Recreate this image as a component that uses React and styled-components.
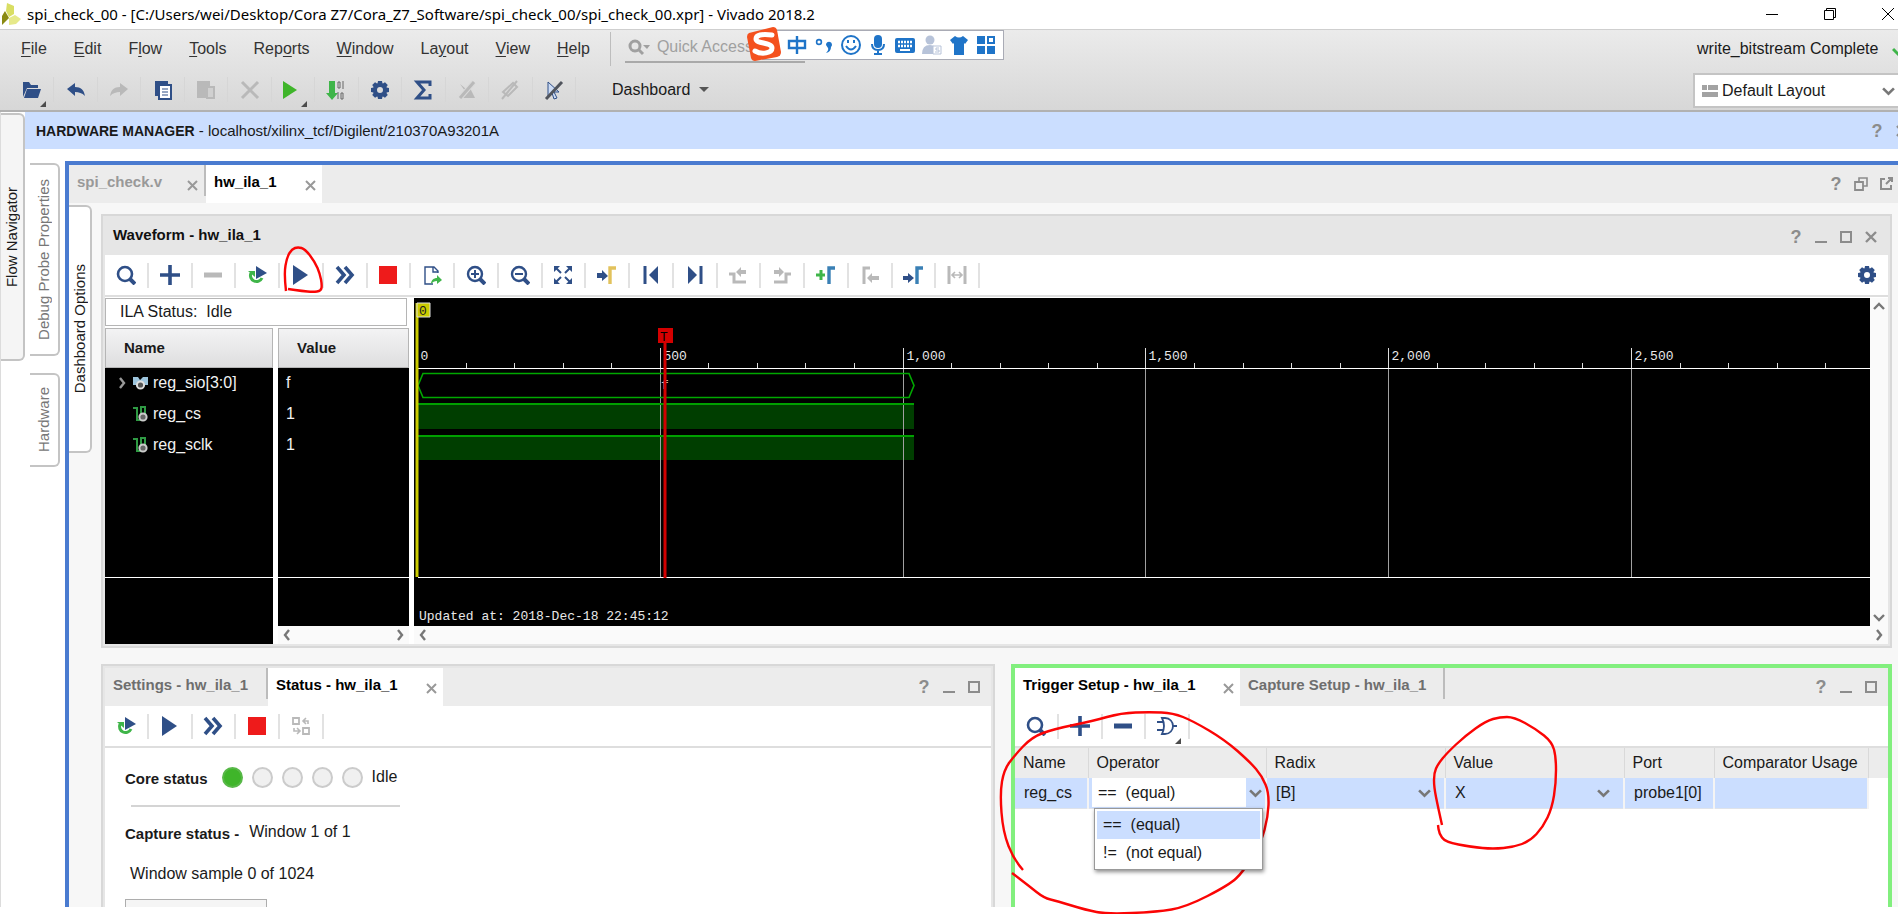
import React from "react";
import styled, { createGlobalStyle } from "styled-components";

const GlobalStyle = createGlobalStyle`
  * {
    box-sizing: border-box;
  }

  body {
    margin: 0;
    overflow: hidden;
    background: #fff;
    color: #1a1a1a;
    font-family: "Liberation Sans", Arial, sans-serif;
    font-size: 16px;
    line-height: 20px;
  }

  button,
  select,
  input {
    font: inherit;
    color: inherit;
    margin: 0;
    padding: 0;
    border: none;
    background: none;
  }

  svg {
    display: block;
    flex: none;
  }
`;

const NAVY = "#2f4f87";
const GREY = "#b9b9b9";
const GREEN = "#3fb549";

/* ---------- icons ---------- */

const line = (color, width = 3) => ({
  fill: "none",
  stroke: color,
  strokeWidth: width,
});

const gearTeeth = [0, 45, 90, 135, 180, 225, 270, 315];

const icons = {
  folder: (
    <>
      <path d="M1 17V2h6l2 3h7v3H5z" fill={NAVY} />
      <path d="M5 9h14l-3 9H2z" fill={NAVY} />
    </>
  ),
  undo: <path d="M1 9l8-6v4c6 0 9 3 10 9-3-3-6-4-10-4v4z" fill={NAVY} />,
  redo: <path d="M19 9l-8-6v4c-6 0-9 3-10 9 3-3 6-4 10-4v4z" fill={GREY} />,
  copy: (
    <>
      <path d="M2 1h13v3H6v12H2z" fill={NAVY} />
      <path d="M6 5h12v14H6z" fill="#fff" stroke={NAVY} strokeWidth="2" />
      <path d="M9 9h6M9 12h6M9 15h6" {...line(NAVY, 1)} />
    </>
  ),
  paste: (
    <>
      <path d="M1 1h13v5h-4v12H1z" fill={GREY} />
      <path d="M11 7h7v11h-7z" fill="#d0d0d0" stroke={GREY} strokeWidth="2" />
    </>
  ),
  cross: <path d="M2 2l16 16M18 2L2 18" {...line(GREY, 3)} />,
  run: <path d="M0 1l14 9-14 9z" fill="#3fb52a" />,
  program: (
    <>
      <path d="M3 1h6v12h3l-6 7-6-7h3z" fill={GREEN} />
      <path d="M12 2h2v6h-2zM17 1v8M12 12v7M15 13h2v6h-2z" {...line("#666", 1)} />
    </>
  ),
  gear: (
    <>
      {gearTeeth.map((a) => (
        <path key={a} d="M8 1h4l1 5H7z" fill={NAVY} transform={`rotate(${a} 10 10)`} />
      ))}
      <circle cx="10" cy="10" r="5" {...line(NAVY, 4)} />
    </>
  ),
  sigma: <path d="M17 6V2H4l7 8-7 8h13v-4" {...line(NAVY, 3)} />,
  bugOff: (
    <>
      <path d="M3 4l6 5 4-5 1 6 4 8H4l4-7z" fill={GREY} />
      <path d="M3 18L17 2" {...line("#d9d9d9", 5)} />
      <path d="M3 18L17 2" {...line(GREY, 3)} />
    </>
  ),
  linkOff: (
    <>
      <path d="M3 12L13 3l4 4-9 9z" {...line(GREY, 2)} />
      <path d="M2 19L17 1" {...line(GREY, 2)} />
    </>
  ),
  cursorOff: (
    <>
      <path d="M4 2l11 10h-5l3 6-3 1-2-6-4 3z" fill="#cddcf5" stroke={NAVY} />
      <path d="M2 19L18 2" {...line("#50545c", 3)} />
    </>
  ),
  search: (
    <>
      <circle cx="9" cy="9" r="7" {...line(NAVY, 2.6)} />
      <path d="M14 14l5 5" {...line(NAVY, 4)} />
    </>
  ),
  plus: <path d="M10 0v20M0 10h20" {...line(NAVY, 3.6)} />,
  minus: <path d="M1 10h18" {...line(NAVY, 5)} />,
  minusGrey: <path d="M1 10h18" {...line(GREY, 5)} />,
  rerun: (
    <>
      <path d="M4 8a6 6 0 1 0 11 5" {...line(GREEN, 3)} />
      <path d="M1 6h7v6z" fill={GREEN} />
      <path d="M9 1l11 7-11 6z" fill={NAVY} />
    </>
  ),
  play: <path d="M2 0l15 10-15 10z" fill={NAVY} />,
  forward: <path d="M2 2l7 8-7 8M10 2l7 8-7 8" {...line(NAVY, 3.6)} />,
  stop: <path d="M1 1h18v18H1z" fill="#ee1b1b" />,
  exportFile: (
    <>
      <path d="M16 8V6l-4-4H3v17h8M11 2v5h5" {...line(NAVY, 1.4)} />
      <path d="M9 19c0-4 3-6 6-6v-3l5 5-5 4v-3c-3 0-4 1-6 3z" fill={GREEN} />
    </>
  ),
  zoomIn: (
    <>
      <circle cx="9" cy="9" r="7" {...line(NAVY, 2.4)} />
      <path d="M14 14l5 5" {...line(NAVY, 4)} />
      <path d="M9 5v8M5 9h8" {...line(NAVY, 2)} />
    </>
  ),
  zoomOut: (
    <>
      <circle cx="9" cy="9" r="7" {...line(NAVY, 2.4)} />
      <path d="M14 14l5 5" {...line(NAVY, 4)} />
      <path d="M5 9h8" {...line(NAVY, 2)} />
    </>
  ),
  fit: (
    <>
      <path d="M1 1h6L1 7zM19 1v6l-6-6zM1 19v-6l6 6zM19 19h-6l6-6z" fill={NAVY} />
      <path d="M3 3l5 5M17 3l-5 5M3 17l5-5M17 17l-5-5" {...line(NAVY, 2)} />
    </>
  ),
  gotoTrigger: (
    <>
      <path d="M0 8h5V5l6 6-6 5v-3H0z" fill={NAVY} />
      <path d="M13 19V3h6" {...line("#e2c25c", 3.4)} />
    </>
  ),
  first: (
    <>
      <path d="M4 1v18" {...line(NAVY, 3)} />
      <path d="M17 1v18l-9-9z" fill={NAVY} />
    </>
  ),
  last: (
    <>
      <path d="M16 1v18" {...line(NAVY, 3)} />
      <path d="M3 1v18l9-9z" fill={NAVY} />
    </>
  ),
  prevEdge: (
    <>
      <path d="M1 9h5v8h12" {...line(GREY, 3)} />
      <path d="M8 7l5-5v3h5v4h-5v3z" fill={GREY} />
    </>
  ),
  nextEdge: (
    <>
      <path d="M2 17h12V9h5" {...line(GREY, 3)} />
      <path d="M12 7L7 2v3H2v4h5v3z" fill={GREY} />
    </>
  ),
  addMarker: (
    <>
      <path d="M5 5v10M0 10h9" {...line(GREEN, 3)} />
      <path d="M13 19V3h6" {...line("#3a80b5", 3.4)} />
    </>
  ),
  prevMarker: (
    <>
      <path d="M4 19V3h6" {...line(GREY, 3)} />
      <path d="M7 13l5-5v3h7v4h-7v3z" fill={GREY} />
    </>
  ),
  nextMarker: (
    <>
      <path d="M0 11h5V8l6 5-6 5v-3H0z" fill={NAVY} />
      <path d="M14 19V3h6" {...line("#3a80b5", 3.4)} />
    </>
  ),
  measure: (
    <>
      <path d="M2 1v18M18 1v18" {...line(GREY, 3)} />
      <path d="M5 10h10M8 7l-3 3 3 3M12 7l3 3-3 3" {...line(GREY, 1.6)} />
    </>
  ),
  swap: (
    <>
      <path d="M2 2h6v6H2zM12 12h6v6h-6z" {...line(GREY, 1.8)} />
      <path d="M17 8V5h-5m3-3l-3 3 3 3M3 12v3h6m-3-3l3 3-3 3" {...line(GREY, 1.6)} />
    </>
  ),
  gate: (
    <path
      d="M5 2h3c5 0 8 4 8 8s-3 8-8 8H5q4-8 0-16zM0 6h6M0 14h6M16 10h4"
      {...line(NAVY, 1.8)}
    />
  ),
};

const Icon = ({ name, size = 20 }) => (
  <svg width={size} height={size} viewBox="0 0 20 20" aria-hidden="true">
    {icons[name]}
  </svg>
);

const Chevron = ({ dir = "down", size = 12, color = "#777" }) => {
  const d = {
    down: "M1 4l5 5 5-5",
    up: "M1 8l5-5 5 5",
    left: "M8 1L4 6l4 5",
    right: "M4 1l4 5-4 5",
  }[dir];
  return (
    <svg width={size} height={size} viewBox="0 0 12 12" aria-hidden="true">
      <path d={d} {...line(color, 2.4)} />
    </svg>
  );
};

const controlShapes = {
  min: <path d="M1 12h12" {...line("#8c8c8c", 2)} />,
  max: <path d="M2 2h10v10H2z" {...line("#8c8c8c", 2)} />,
  close: <path d="M2 2l10 10M12 2L2 12" {...line("#8c8c8c", 2.4)} />,
  float: (
    <>
      <path d="M5 5V1h8v8H9" {...line("#8c8c8c", 1.6)} />
      <path d="M1 5h8v8H1z" {...line("#8c8c8c", 1.8)} />
    </>
  ),
  popout: <path d="M6 2H2v10h10V8M7 7l5-5M9 1h4v4" {...line("#8c8c8c", 2)} />,
};

/* ---------- title bar and menus ---------- */

const Page = styled.div`
  position: relative;
  display: flex;
  flex-direction: column;
  height: 100vh;
  padding-bottom: 7px;
  overflow: hidden;
`;

const TitleBar = styled.div`
  display: flex;
  align-items: center;
  justify-content: space-between;
  flex: none;
  height: 30px;
  padding: 0 3px 2px 0;
  border-bottom: 1px solid #cfcfcf;
  color: #000;
  font-family: "Noto Sans", "Open Sans", sans-serif;
  font-size: 15px;

  .caption,
  .buttons {
    display: flex;
    align-items: center;
  }

  .caption {
    gap: 5px;
  }

  .buttons {
    gap: 44px;
  }
`;

const Header = styled.header`
  position: relative;
  display: flex;
  justify-content: space-between;
  flex: none;
  height: 82px;
  border-bottom: 2px solid #b1b1b1;
  background: linear-gradient(#ebebeb, #d7d7d7);
`;

const MenuRow = styled.nav`
  display: flex;
  align-items: center;
  height: 38px;
  padding-left: 21px;

  ul {
    display: flex;
    gap: 27px;
    margin: 0;
    padding: 0;
    list-style: none;
  }

  button {
    color: #333;
  }

  u {
    text-underline-offset: 2px;
  }
`;

const QuickAccess = styled.label`
  display: flex;
  align-items: center;
  width: 195px;
  height: 34px;
  margin-left: 20px;
  padding-left: 14px;
  border-left: 1px solid #bdbdbd;

  div {
    display: flex;
    align-items: center;
    gap: 6px;
    flex: 1;
    height: 28px;
    padding: 0 0 3px 3px;
    border-bottom: 2px solid #a9a9a9;
  }

  input {
    width: 100%;
    outline: none;
  }

  input::placeholder {
    color: #a0a0a0;
    opacity: 1;
  }
`;

const MainTools = styled.div`
  display: flex;
  align-items: center;
  height: 43px;
  padding-left: 11px;
`;

const ToolGrid = styled.div`
  display: grid;
  grid-template-columns: repeat(${(p) => p.$count}, 1fr);
  width: 100%;
  max-width: ${(p) => p.$width}px;
`;

const ToolButton = styled.button`
  position: relative;
  display: flex;
  align-items: center;
  justify-content: center;
  height: 25px;
  border-right: ${(p) => (p.$quiet ? 1 : 2)}px solid
    ${(p) => (p.$quiet ? "#d6d6d6" : "#e2e2e2")};

  &.has-menu::after {
    content: "";
    position: absolute;
    right: 7px;
    bottom: -5px;
    border: 3px solid transparent;
    border-right-color: #4c4c4c;
    border-bottom-color: #4c4c4c;
  }
`;

const DashboardMenu = styled.button`
  display: flex;
  align-items: center;
  gap: 9px;
  margin-left: 36px;

  &::after {
    content: "";
    border: 5px solid transparent;
    border-top-color: #555;
    border-bottom: 0;
  }
`;

const HeaderRight = styled.div`
  display: flex;
  flex-direction: column;
  width: 205px;

  .status {
    display: flex;
    align-items: center;
    gap: 14px;
    height: 38px;
    margin-right: -20px;
    padding-left: 4px;
    white-space: nowrap;
  }
`;

const LayoutPicker = styled.label`
  display: flex;
  align-items: center;
  gap: 4px;
  height: 35px;
  margin-top: 5px;
  padding: 0 3px 0 7px;
  border: 2px solid #c4c4c4;
  border-right: none;
  background: #fff;

  select {
    flex: 1;
    appearance: none;
  }
`;

const ImeBar = styled.div`
  position: absolute;
  top: 0;
  left: 762px;
  display: flex;
  align-items: center;
  gap: 5px;
  width: 242px;
  height: 30px;
  padding-left: 23px;
  border: 1px solid #a9abb5;
  background: #fff;

  .logo {
    position: absolute;
    top: -5px;
    left: -17px;
  }
`;

const blue = "#1f74c8";

const imeIcons = [
  <path key="zh" d="M3 7h16v7H3zM11 2v18" {...line(blue, 2.4)} />,
  <g key="punct">
    <circle cx="6" cy="8" r="2.4" {...line(blue, 1.6)} />
    <path d="M13 11a3 3 0 1 1 5 2q0 5-5 6 3-3 2-5z" fill={blue} />
  </g>,
  <g key="smile">
    <circle cx="11" cy="11" r="9" {...line(blue, 2)} />
    <path d="M6 12q5 7 10 0M8 6v3M14 6v3" {...line(blue, 2)} />
  </g>,
  <g key="mic">
    <rect x="7" y="1" width="8" height="13" rx="4" fill={blue} />
    <path d="M5 10q0 6 6 6t6-6M11 16v4M7 20h8" {...line(blue, 2)} />
  </g>,
  <g key="keys">
    <rect x="1" y="4" width="20" height="15" rx="2" fill={blue} />
    <path d="M4 8h14M4 12h14" {...line("#fff", 2.4)} strokeDasharray="2 1" />
    <path d="M6 16h10" {...line("#fff", 2)} />
  </g>,
  <g key="person">
    <circle cx="9" cy="6" r="4.5" fill="#b7c3d9" />
    <path d="M1 20q0-9 8-9 7 0 7 9z" fill="#b7c3d9" />
    <path d="M12 12h8v8h-8z" fill="#fff" stroke="#b7c3d9" />
    <path d="M18 14h-3v2h3v2h-4" {...line("#b7c3d9", 1)} />
  </g>,
  <path key="shirt" d="M7 2q4 3 8 0l5 4-3 4-1-1v12H6V9l-1 1-3-4z" fill={blue} />,
  <g key="grid">
    <path d="M2 2h8v8H2zM2 12h8v8H2zM12 12h8v8h-8z" fill={blue} />
    <path d="M13 3h6v6h-6z" {...line(blue, 2)} />
  </g>,
];

/* ---------- workspace ---------- */

const ManagerBar = styled.div`
  display: flex;
  align-items: center;
  justify-content: space-between;
  flex: none;
  height: 37px;
  padding-left: 11px;
  background: #cbdeff;
  font-size: 15px;

  b {
    font-size: 14px;
  }
`;

const Controls = styled.div`
  display: flex;
  align-items: center;
  gap: 11px;
  margin-right: ${(p) => p.$right || 0}px;

  button {
    display: flex;
    justify-content: center;
    width: 14px;
    color: #8c8c8c;
    font-size: 18px;
    font-weight: bold;
  }
`;

const Workspace = styled.div`
  display: flex;
  flex: 1;
  min-height: 0;
  border-left: 1px solid #dcdcdc;
`;

const Rail = styled.div`
  display: flex;
  flex-direction: column;
  flex: none;
  align-items: flex-start;
  gap: 17px;
  padding: ${(p) => p.$top}px ${(p) => p.$side || 0}px 0;
`;

const SideTab = styled.button`
  display: flex;
  align-items: center;
  justify-content: center;
  width: ${(p) => p.$width}px;
  min-height: ${(p) => p.$height}px;
  border: 2px solid #c4c4c4;
  border-left: none;
  border-radius: 0 6px 6px 0;
  background: ${(p) => p.$bg || "#fff"};
  color: ${(p) => p.$color || "#1a1a1a"};
  font-size: 15px;

  span {
    writing-mode: vertical-rl;
    transform: rotate(180deg);
  }
`;

const Column = styled.div`
  display: flex;
  flex-direction: column;
  flex: 1;
  min-width: 0;
`;

const Dashboard = styled.div`
  display: flex;
  flex-direction: column;
  flex: 1;
  min-width: 0;
  min-height: 0;
  margin-top: 12px;
  border-top: 4px solid #4a7bd0;
  border-left: 4px solid #4a7bd0;
  background: #f7f7f7;
`;

const TabStrip = styled.div`
  display: flex;
  align-items: stretch;
  flex: none;
  height: 38px;
  background: #ececec;

  ${Controls} {
    margin-left: auto;
  }
`;

const Tab = styled.button`
  display: flex;
  align-items: center;
  justify-content: space-between;
  width: ${(p) => p.$width}px;
  padding: 0 6px 4px 8px;
  background: ${(p) => (p.$active ? "#fff" : "transparent")};
  color: ${(p) => (p.$active ? "#000" : p.$faded ? "#999" : "#6e6e6e")};
  font-size: 15px;
  font-weight: bold;
  white-space: nowrap;

  svg {
    margin-top: 6px;
  }
`;

const TabDivider = styled.span`
  width: 2px;
  height: 31px;
  background: #bcbcbc;
`;

const Board = styled.div`
  display: flex;
  flex: 1;
  min-height: 0;
`;

const Panels = styled.main`
  display: flex;
  flex-direction: column;
  flex: 1;
  gap: 16px;
  min-width: 0;
  padding: 11px 6px 0 9px;
`;

const BottomPanels = styled.div`
  display: grid;
  grid-template-columns: 894fr 881fr;
  gap: 16px;
  flex: 1;
  min-height: 0;
`;

const Panel = styled.section`
  display: flex;
  flex-direction: column;
  min-width: 0;
  overflow: hidden;
  border: 2px solid #d8d8d8;
  padding: 2px 2px 0;
  background: #e6e6e6;

  &.wave {
    flex: none;
    padding-bottom: 2px;
  }

  &.docked {
    border-bottom: none;
  }

  &.focused {
    border: 4px solid #82ef7e;
    border-bottom: none;
    padding: 0;
  }
`;

const PanelTitle = styled.div`
  display: flex;
  align-items: center;
  justify-content: space-between;
  height: 37px;
  padding-left: 8px;

  h2 {
    margin: 0;
    padding-bottom: 4px;
    color: #111;
    font-size: 15px;
  }
`;

const PanelBar = styled.div`
  display: flex;
  align-items: center;
  justify-content: space-between;
  flex: none;
  height: 42px;
  padding-right: 11px;
  border-bottom: 2px solid #dedede;
  background: #fff;
`;

const WaveBody = styled.div`
  display: flex;
  gap: 5px;
  height: 347px;
  padding-top: 1px;
  background: #fff;
`;

const SignalPane = styled.div`
  display: flex;
  flex-direction: column;
  gap: 2px;
  width: 304px;

  .ila-status {
    height: 28px;
    margin-right: 2px;
    padding: 3px 14px;
    border: 1px solid #b5b5b5;
    white-space: pre;
  }

  .columns {
    display: grid;
    grid-template-columns: 168px 131px;
    gap: 5px;
    flex: 1;
  }
`;

const SignalColumn = styled.div`
  display: flex;
  flex-direction: column;
  background: #000;
  color: #f2f2f2;

  h3 {
    height: 40px;
    margin: 0;
    padding: 9px 18px;
    border: 1px solid #b5b5b5;
    background: linear-gradient(#f3f3f4, #dededf);
    color: #1a1a1a;
    font-size: 15px;
  }

  .signals {
    height: 210px;
    border-bottom: 1px solid #fff;
  }
`;

const SignalRow = styled.div`
  display: flex;
  align-items: center;
  gap: 5px;
  height: 31px;
  padding: 0 0 1px ${(p) => p.$indent}px;
`;

const ScrollBar = styled.div`
  display: flex;
  flex-direction: ${(p) => (p.$vertical ? "column" : "row")};
  align-items: center;
  justify-content: space-between;
  ${(p) => (p.$vertical ? "width" : "height")}: 18px;
  margin-top: ${(p) => (p.$vertical ? 0 : "auto")};
  padding: ${(p) => (p.$vertical ? "3px 0" : "0 3px")};
  background: #fafafa;
`;

const WaveView = styled.div`
  display: flex;
  flex-direction: column;
  flex: 1;
  min-width: 0;

  .plot {
    display: flex;
    height: 328px;
  }

  svg.canvas {
    flex: 1;
    min-width: 0;
    height: 328px;
    background: #000;
    font-family: "Liberation Mono", monospace;
    font-size: 13px;
  }
`;

/* ---------- status and trigger panels ---------- */

const StatusBody = styled.div`
  flex: 1;
  padding: 17px 20px;
  background: #fff;

  .core {
    display: flex;
    align-items: center;
    gap: 9px;
  }

  b {
    padding-top: 4px;
    font-size: 15px;
  }

  .core b {
    margin-right: 5px;
  }

  hr {
    width: 269px;
    height: 2px;
    margin: 16px 0 13px 6px;
    border: none;
    background: #d4d4d4;
  }

  .capture {
    display: flex;
    align-items: center;
    gap: 10px;
  }

  p {
    margin: 20px 0 15px 5px;
  }
`;

const Led = styled.i`
  width: 21px;
  height: 21px;
  border: 2px solid ${(p) => (p.$on ? "#58b848" : "#cbcbcb")};
  border-radius: 50%;
  background: ${(p) => (p.$on ? "#3fb52a" : "#f0f0f0")};
`;

const ProgressBox = styled.div`
  width: 142px;
  height: 28px;
  border: 1px solid #adadad;
  background: #f5f5f5;
`;

const TriggerBody = styled.div`
  flex: 1;
  background: #fff;
`;

const TriggerTable = styled.table`
  width: 100%;
  border-collapse: collapse;
  table-layout: fixed;

  th {
    height: 30px;
    padding: 0 0 0 8px;
    border-right: 1px solid #d9d9d9;
    background: #ececec;
    font-weight: normal;
    text-align: left;
    white-space: nowrap;
  }

  th:last-child {
    border-right: none;
  }

  td {
    position: relative;
    height: 30px;
    padding: 0 0 0 9px;
    border-right: 2px solid #f4f4f4;
    border-bottom: 1px solid #dfe3ea;
    background: #cbdeff;
  }

  td:last-child {
    border: none;
    background: #fff;
  }

  td.editing {
    padding-left: 3px;
  }

  td.editing select {
    padding-left: 6px;
    background: #fff;
  }
`;

const CellSelect = styled.div`
  display: flex;
  align-items: center;
  gap: 3px;

  select {
    flex: 1;
    height: 29px;
    min-width: 0;
    appearance: none;
    white-space: pre;
  }

  svg {
    margin-right: ${(p) => p.$right}px;
  }
`;

const Popup = styled.ul`
  position: absolute;
  top: 30px;
  left: 5px;
  z-index: 2;
  width: 169px;
  margin: 0;
  padding: 2px;
  border: 1px solid #999;
  background: #fff;
  box-shadow: 1px 2px 4px rgba(0, 0, 0, 0.45);
  list-style: none;

  li {
    height: 28px;
    padding: 4px 6px;
    white-space: pre;
  }

  li[aria-selected="true"] {
    background: #cbdeff;
  }
`;

const Marks = styled.svg`
  position: absolute;
  inset: 0;
  width: 100%;
  height: 100%;
  pointer-events: none;
`;

const mainTools = [
  ["folder", "Open project", true],
  ["undo", "Undo"],
  ["redo", "Redo"],
  ["copy", "Copy"],
  ["paste", "Paste"],
  ["cross", "Delete"],
  ["run", "Run", true],
  ["program", "Generate bitstream"],
  ["gear", "Settings"],
  ["sigma", "Report"],
  ["bugOff", "Debug"],
  ["linkOff", "Unlink"],
  ["cursorOff", "Unselect"],
];

const waveTools = [
  ["search", "Find"],
  ["plus", "Add"],
  ["minusGrey", "Remove"],
  ["rerun", "Auto re-trigger"],
  ["play", "Run trigger"],
  ["forward", "Run trigger immediate"],
  ["stop", "Stop trigger"],
  ["exportFile", "Export"],
  ["zoomIn", "Zoom in"],
  ["zoomOut", "Zoom out"],
  ["fit", "Zoom fit"],
  ["gotoTrigger", "Go to trigger"],
  ["first", "Go to start"],
  ["last", "Go to end"],
  ["prevEdge", "Previous transition"],
  ["nextEdge", "Next transition"],
  ["addMarker", "Add marker"],
  ["prevMarker", "Previous marker"],
  ["nextMarker", "Next marker"],
  ["measure", "Measure"],
];

const statusTools = [
  ["rerun", "Auto re-trigger"],
  ["play", "Run trigger"],
  ["forward", "Run trigger immediate"],
  ["stop", "Stop trigger"],
  ["swap", "Swap"],
];

const triggerTools = [
  ["search", "Find"],
  ["plus", "Add probe"],
  ["minus", "Remove probe"],
  ["gate", "Trigger condition", true],
];

// [before, mnemonic, after]
const menus = [
  ["", "F", "ile"],
  ["", "E", "dit"],
  ["F", "l", "ow"],
  ["", "T", "ools"],
  ["Rep", "o", "rts"],
  ["", "W", "indow"],
  ["La", "y", "out"],
  ["", "V", "iew"],
  ["", "H", "elp"],
];

const Tools = ({ items, width, quiet }) => (
  <ToolGrid $count={items.length} $width={width}>
    {items.map(([name, label, menu]) => (
      <ToolButton
        key={name}
        $quiet={quiet}
        className={menu ? "has-menu" : undefined}
        aria-label={label}
      >
        <Icon name={name} />
      </ToolButton>
    ))}
  </ToolGrid>
);

const WindowControls = ({ items, right }) => (
  <Controls $right={right}>
    {items.map((item) => (
      <button key={item} aria-label={item}>
        {item === "help" ? (
          "?"
        ) : (
          <svg width="14" height="14" viewBox="0 0 14 14">
            {controlShapes[item]}
          </svg>
        )}
      </button>
    ))}
  </Controls>
);

const TabClose = () => (
  <svg width="11" height="11" viewBox="0 0 11 11">
    <path d="M1 1l9 9M10 1l-9 9" {...line("#999", 2)} />
  </svg>
);

const BusIcon = () => (
  <svg width="15" height="13" viewBox="0 0 15 13">
    <path d="M0 0h5l2 3 3-3h5v8H0z" fill="#9cc4dc" />
    <circle cx="7.5" cy="8" r="3.6" fill="#555" stroke="#ddd" strokeWidth="2" />
  </svg>
);

const WireIcon = () => (
  <svg width="15" height="16" viewBox="0 0 15 16">
    <path d="M0 2h4v12h4V1h4v9" {...line("#2f9a44", 2)} />
    <circle cx="10" cy="11" r="3.6" fill="#666" stroke="#ccc" strokeWidth="2" />
  </svg>
);

/* ---------- waveform ---------- */

const ORIGIN = 4;
const SAMPLE = 0.4856;
const END = 500;
const xAt = (sample) => Math.round(ORIGIN + sample * SAMPLE);

const ticks = Array.from({ length: 30 }, (_, i) => i * 100);

const Waveform = () => (
  <svg className="canvas">
    <path d={`M${ORIGIN} 107H${END}V131H${ORIGIN}z`} fill="#003e00" />
    <path d={`M${ORIGIN} 138H${END}V162H${ORIGIN}z`} fill="#003e00" />
    {ticks.map((t) => {
      const x = xAt(t) - 0.5;
      const major = t % 500 === 0;
      return (
        <g key={t}>
          <line x1={x} x2={x} y1={major ? 50 : 65} y2="70" stroke="#ddd" />
          {major && (
            <>
              <line x1={x} x2={x} y1="70" y2="279" stroke="#a0a0a0" />
              <text x={x + 3} y="62" fill="#e8e8e8">
                {t.toLocaleString("en-US")}
              </text>
            </>
          )}
        </g>
      );
    })}
    <line x1={ORIGIN} x2="100%" y1="70.5" y2="70.5" stroke="#fff" />
    <line x1={ORIGIN} x2="100%" y1="279.5" y2="279.5" stroke="#fff" />
    <path
      d={`M${ORIGIN} 87.5L9 75.5H${END - 5}L${END} 87.5L${END - 5} 99.5H9z`}
      {...line("#00a800", 1.6)}
    />
    <path d={`M${ORIGIN} 106H${END}M${ORIGIN} 138H${END}`} {...line("#00a000", 2)} />
    <text x="247" y="91" fill="#ccc">
      f
    </text>
    <path d="M3 5V279" {...line("#cccc00", 3)} />
    <path d="M3 5h13v14H3z" fill="#cccc00" stroke="#ddd" />
    <text x="5" y="17" fill="#222">
      0
    </text>
    <path d="M251 44V280" {...line("#d40000", 3)} />
    <path d="M244 30h15v15h-15z" fill="#d40000" />
    <text x="246" y="43" fill="#000">
      T
    </text>
    <text x="5" y="322" fill="#e8e8e8">
      Updated at: 2018-Dec-18 22:45:12
    </text>
  </svg>
);

/* ---------- pen marks ---------- */

const strokes = [
  "286,291 284,274 287,257 292,249 298,247 305,249 315,262 320,274 322,285 321,291 313,292 302,291 288,289",
  "1023,870 1014,860 1003,832 1000,793 1004,770 1014,756 1032,737 1054,729 1093,721 1121,713 1150,712 1173,713 1193,721 1225,740 1250,762 1262,776 1269,793 1268,817 1261,843 1243,872 1229,885 1186,907 1157,912 1107,914 1086,910 1057,901 1044,898 1029,886 1012,873",
  "1442,825 1438,807 1434,787 1434,773 1438,764 1447,753 1465,736 1486,721 1500,717 1514,717 1536,729 1552,742 1556,757 1556,783 1552,808 1543,827 1530,841 1514,847 1493,849 1472,847 1445,842 1439,833 1438,825",
];

const smooth = (text) => {
  const pts = text.split(" ").map((p) => p.split(",").map(Number));
  let d = `M${pts[0]}`;
  for (let i = 1; i < pts.length - 1; i++) {
    const [x, y] = pts[i];
    const [nx, ny] = pts[i + 1];
    d += `Q${x} ${y} ${(x + nx) / 2} ${(y + ny) / 2}`;
  }
  return `${d}L${pts[pts.length - 1]}`;
};

const App = () => {
  return (
    <Page>
      <GlobalStyle />
      <TitleBar>
        <div className="caption">
          <svg width="22" height="24" viewBox="0 0 22 24">
            <path d="M7 1l7 3v8l-5 3-3-6z" fill="#d9de63" />
            <path d="M5 9l4 7-7 7V14z" fill="#8a8a12" />
            <path d="M9 16l6-3 6 4-5 5-7 1z" fill="#e6e98a" />
          </svg>
          <span>
            spi_check_00 - [C:/Users/wei/Desktop/Cora Z7/Cora_Z7_Software/spi_check_00/spi_check_00.xpr] - Vivado
            2018.2
          </span>
        </div>
        <div className="buttons">
          <button aria-label="Minimize">
            <svg width="14" height="14" viewBox="0 0 14 14">
              <path d="M1 7.5h12" {...line("#000", 1)} />
            </svg>
          </button>
          <button aria-label="Restore">
            <svg width="14" height="14" viewBox="0 0 14 14">
              <path d="M1.5 3.5h9v9h-9zM3.5 3.5v-2h9v9h-2" {...line("#000", 1)} />
            </svg>
          </button>
          <button aria-label="Close">
            <svg width="14" height="14" viewBox="0 0 14 14">
              <path d="M1 1l12 12M13 1L1 13" {...line("#000", 1)} />
            </svg>
          </button>
        </div>
      </TitleBar>

      <Header>
        <div>
          <MenuRow>
            <ul>
              {menus.map(([before, key, after]) => (
                <li key={before + key + after}>
                  <button>
                    {before}
                    <u>{key}</u>
                    {after}
                  </button>
                </li>
              ))}
            </ul>
            <QuickAccess>
              <div>
                <svg width="23" height="18" viewBox="0 0 23 18">
                  <circle cx="7" cy="8" r="5" {...line("#a0a0a0", 3)} />
                  <path d="M11 12l4 4" {...line("#a0a0a0", 3)} />
                  <path d="M15 7h7l-3 4z" fill="#a0a0a0" />
                </svg>
                <input type="text" placeholder="Quick Access" aria-label="Quick Access" />
              </div>
            </QuickAccess>
          </MenuRow>
          <MainTools>
            <Tools items={mainTools} width={565} quiet />
            <DashboardMenu>Dashboard</DashboardMenu>
          </MainTools>
        </div>
        <HeaderRight>
          <div className="status">
            <span>write_bitstream Complete</span>
            <svg width="16" height="16" viewBox="0 0 16 16">
              <path d="M1 8l5 5 9-11" {...line(GREEN, 3)} />
            </svg>
          </div>
          <LayoutPicker>
            <svg width="16" height="14" viewBox="0 0 16 14">
              <path d="M0 1h5v5H0zM6 1h10v5H6zM0 8h16v5H0z" fill="#a3a3a3" />
            </svg>
            <select aria-label="Layout">
              <option>Default Layout</option>
            </select>
            <Chevron size={13} />
          </LayoutPicker>
        </HeaderRight>
        <ImeBar>
          <svg className="logo" width="36" height="36" viewBox="0 0 36 36">
            <path d="M3 7l24-6q3 0 4 3l4 22q0 4-4 5L9 35q-3 0-4-3L1 11q0-3 2-4z" fill="#f4511e" />
            <path
              d="M26 9Q10 7 10 13c0 5 16 3 16 9 0 5-10 7-17 3"
              {...line("#fff", 5)}
              strokeLinecap="round"
            />
          </svg>
          {imeIcons.map((shape) => (
            <svg key={shape.key} width="22" height="22" viewBox="0 0 22 22">
              {shape}
            </svg>
          ))}
        </ImeBar>
      </Header>

      <Workspace>
        <Rail $top={1}>
          <SideTab $width={24} $height={248} $bg="#f5f5f5">
            <span>Flow Navigator</span>
          </SideTab>
        </Rail>
        <Column>
          <ManagerBar>
            <span>
              <b>HARDWARE MANAGER</b> - localhost/xilinx_tcf/Digilent/210370A93201A
            </span>
            <WindowControls items={["help", "close"]} right={-11} />
          </ManagerBar>
          <Board>
            <Rail $top={14} $side={5}>
              <SideTab $width={30} $height={193} $color="#777">
                <span>Debug Probe Properties</span>
              </SideTab>
              <SideTab $width={30} $height={94} $color="#777">
                <span>Hardware</span>
              </SideTab>
            </Rail>
            <Dashboard>
              <TabStrip>
                <Tab $width={135} $faded>
                  spi_check.v
                  <TabClose />
                </Tab>
                <TabDivider />
                <Tab $width={116} $active>
                  hw_ila_1
                  <TabClose />
                </Tab>
                <WindowControls items={["help", "float", "popout"]} right={5} />
              </TabStrip>
              <Board>
                <Rail $top={2}>
                  <SideTab $width={23} $height={248}>
                    <span>Dashboard Options</span>
                  </SideTab>
                </Rail>
                <Panels>
                  <Panel className="wave">
                    <PanelTitle>
                      <h2>Waveform - hw_ila_1</h2>
                      <WindowControls items={["help", "min", "max", "close"]} right={10} />
                    </PanelTitle>
                    <PanelBar>
                      <Tools items={waveTools} width={875} />
                      <button aria-label="Waveform settings">
                        <Icon name="gear" />
                      </button>
                    </PanelBar>
                    <WaveBody>
                      <SignalPane>
                        <div className="ila-status">ILA Status:&nbsp; Idle</div>
                        <div className="columns">
                          <SignalColumn>
                            <h3>Name</h3>
                            <div className="signals">
                              <SignalRow $indent={11}>
                                <Chevron dir="right" color="#999" />
                                <BusIcon />
                                reg_sio[3:0]
                              </SignalRow>
                              <SignalRow $indent={28}>
                                <WireIcon />
                                reg_cs
                              </SignalRow>
                              <SignalRow $indent={28}>
                                <WireIcon />
                                reg_sclk
                              </SignalRow>
                            </div>
                          </SignalColumn>
                          <SignalColumn>
                            <h3>Value</h3>
                            <div className="signals">
                              <SignalRow $indent={8}>f</SignalRow>
                              <SignalRow $indent={8}>1</SignalRow>
                              <SignalRow $indent={8}>1</SignalRow>
                            </div>
                            <ScrollBar>
                              <Chevron dir="left" />
                              <Chevron dir="right" />
                            </ScrollBar>
                          </SignalColumn>
                        </div>
                      </SignalPane>
                      <WaveView>
                        <div className="plot">
                          <Waveform />
                          <ScrollBar $vertical>
                            <Chevron dir="up" />
                            <Chevron />
                          </ScrollBar>
                        </div>
                        <ScrollBar>
                          <Chevron dir="left" />
                          <Chevron dir="right" />
                        </ScrollBar>
                      </WaveView>
                    </WaveBody>
                  </Panel>

                  <BottomPanels>
                    <Panel className="docked">
                      <TabStrip>
                        <Tab $width={161}>Settings - hw_ila_1</Tab>
                        <TabDivider />
                        <Tab $width={175} $active>
                          Status - hw_ila_1
                          <TabClose />
                        </Tab>
                        <WindowControls items={["help", "min", "max"]} right={10} />
                      </TabStrip>
                      <PanelBar>
                        <Tools items={statusTools} width={219} />
                      </PanelBar>
                      <StatusBody>
                        <div className="core">
                          <b>Core status</b>
                          <Led $on />
                          <Led />
                          <Led />
                          <Led />
                          <Led />
                          <span>Idle</span>
                        </div>
                        <hr />
                        <div className="capture">
                          <b>Capture status -</b>
                          <span>Window 1 of 1</span>
                        </div>
                        <p>Window sample 0 of 1024</p>
                        <ProgressBox />
                      </StatusBody>
                    </Panel>

                    <Panel className="focused">
                      <TabStrip>
                        <Tab $width={225} $active>
                          Trigger Setup - hw_ila_1
                          <TabClose />
                        </Tab>
                        <Tab $width={203}>Capture Setup - hw_ila_1</Tab>
                        <TabDivider />
                        <WindowControls items={["help", "min", "max"]} right={10} />
                      </TabStrip>
                      <PanelBar>
                        <Tools items={triggerTools} width={175} />
                      </PanelBar>
                      <TriggerBody>
                        <TriggerTable>
                          <colgroup>
                            <col width="73" />
                            <col width="178" />
                            <col width="179" />
                            <col width="179" />
                            <col width="90" />
                            <col width="154" />
                            <col />
                          </colgroup>
                          <thead>
                            <tr>
                              <th>Name</th>
                              <th>Operator</th>
                              <th>Radix</th>
                              <th>Value</th>
                              <th>Port</th>
                              <th>Comparator Usage</th>
                              <th aria-label="More" />
                            </tr>
                          </thead>
                          <tbody>
                            <tr>
                              <td>reg_cs</td>
                              <td className="editing">
                                <CellSelect $right={3}>
                                  <select aria-label="Operator">
                                    <option>==&nbsp; (equal)</option>
                                    <option>!=&nbsp; (not equal)</option>
                                  </select>
                                  <Chevron size={13} />
                                </CellSelect>
                                <Popup role="listbox">
                                  <li role="option" aria-selected="true">
                                    ==&nbsp; (equal)
                                  </li>
                                  <li role="option" aria-selected="false">
                                    !=&nbsp; (not equal)
                                  </li>
                                </Popup>
                              </td>
                              <td>
                                <CellSelect $right={13}>
                                  <select aria-label="Radix">
                                    <option>[B]</option>
                                  </select>
                                  <Chevron size={13} />
                                </CellSelect>
                              </td>
                              <td>
                                <CellSelect $right={13}>
                                  <select aria-label="Value">
                                    <option>X</option>
                                  </select>
                                  <Chevron size={13} />
                                </CellSelect>
                              </td>
                              <td>probe1[0]</td>
                              <td />
                              <td />
                            </tr>
                          </tbody>
                        </TriggerTable>
                      </TriggerBody>
                    </Panel>
                  </BottomPanels>
                </Panels>
              </Board>
            </Dashboard>
          </Board>
        </Column>
      </Workspace>

      <Marks>
        {strokes.map((s) => (
          <path key={s} d={smooth(s)} {...line("#fb0505", 2.4)} />
        ))}
      </Marks>
    </Page>
  );
};

export default App;
